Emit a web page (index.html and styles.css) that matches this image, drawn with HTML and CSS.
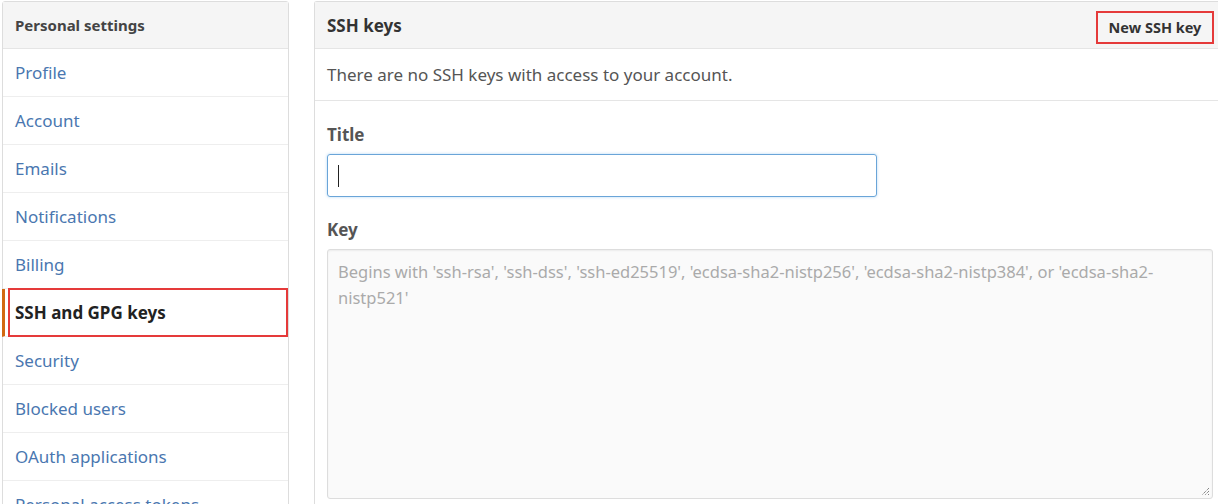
FILE: index.html
```html
<!DOCTYPE html>
<html>
<head>
<meta charset="utf-8">
<link rel="stylesheet" href="styles.css">
</head>
<body>
<div class="page">
  <nav class="menu">
    <div class="menu-heading">Personal settings</div>
    <a class="menu-item">Profile</a>
    <a class="menu-item">Account</a>
    <a class="menu-item">Emails</a>
    <a class="menu-item">Notifications</a>
    <a class="menu-item">Billing</a>
    <a class="menu-item selected">SSH and GPG keys</a>
    <a class="menu-item">Security</a>
    <a class="menu-item">Blocked users</a>
    <a class="menu-item">OAuth applications</a>
    <a class="menu-item">Personal access tokens</a>
  </nav>
  <main class="main">
    <div class="panel-head">
      <h3 class="panel-title">SSH keys</h3>
      <button class="btn-new">New SSH key</button>
    </div>
    <div class="panel-row">There are no SSH keys with access to your account.</div>
    <form class="form">
      <label class="label">Title</label>
      <div class="input"><span class="caret"></span></div>
      <label class="label key-label">Key</label>
      <div class="textarea">
        <span class="placeholder">Begins with 'ssh-rsa', 'ssh-dss', 'ssh-ed25519', 'ecdsa-sha2-nistp256', 'ecdsa-sha2-nistp384', or 'ecdsa-sha2-nistp521'</span>
        <svg class="grip" width="10" height="10" viewBox="0 0 10 10"><path d="M9 2L2 9M9 5L5 9M9 8L8 9" stroke="#555" stroke-width="1" stroke-dasharray="1 1"/></svg>
      </div>
    </form>
  </main>
</div>
</body>
</html>
```
FILE: styles.css
```css
* { box-sizing: border-box; }
html, body { margin: 0; padding: 0; background: #fff; overflow: hidden; }
body {
  font-family: "Noto Sans", "Open Sans", "Liberation Sans", sans-serif;
  color: #333;
  height: 504px;
}
.page {
  display: flex;
  align-items: flex-start;
  padding: 1px 0 0 2px;
  width: 1218px;
  height: 504px;
}
.menu {
  width: 287px;
  flex: none;
  border: 1px solid #ddd;
  border-radius: 3px;
  display: flex;
  flex-direction: column;
}
.menu-heading {
  height: 47px;
  background: #f5f5f5;
  border-bottom: 1px solid #e5e5e5;
  padding: 0 12px;
  display: flex;
  align-items: center;
  font-size: 15px;
  font-weight: 700;
  color: #444;
}
.menu-item {
  height: 48px;
  border-bottom: 1px solid #eee;
  padding: 0 12px;
  display: flex;
  align-items: center;
  font-size: 17px;
  color: #4a77b0;
  text-decoration: none;
  position: relative;
}
.menu-item.selected {
  font-weight: 700;
  color: #222;
  border-left: 3px solid #d26911;
  padding-left: 10px;
  margin-left: -1px;
}
.menu-item.selected::after {
  content: "";
  position: absolute;
  left: 3px;
  top: -1px;
  right: 0;
  bottom: -1px;
  border: 2.5px solid #e53a3a;
}
.main {
  margin-left: 25px;
  flex: 1;
  align-self: stretch;
  border: 1px solid #ddd;
  border-right: none;
  border-bottom: none;
  border-radius: 3px 0 0 0;
  display: flex;
  flex-direction: column;
}
.panel-head {
  height: 47px;
  background: #f5f5f5;
  border-bottom: 1px solid #e5e5e5;
  display: flex;
  align-items: center;
  justify-content: space-between;
  padding: 0 0 0 12px;
}
.panel-title {
  margin: 0;
  font-size: 17px;
  font-weight: 700;
  color: #333;
}
.btn-new {
  font-family: inherit;
  font-size: 14.5px;
  font-weight: 700;
  color: #333;
  background: #f5f5f5;
  border: 2.5px solid #e53a3a;
  height: 33px;
  width: 118px;
  padding: 0;
  margin-right: 4px;
  margin-top: 4px;
}
.panel-row {
  height: 52px;
  padding: 0 12px;
  display: flex;
  align-items: center;
  font-size: 17px;
  color: #555;
  border-bottom: 1px solid #e5e5e5;
}
.form {
  padding: 22px 0 0 12px;
  display: flex;
  flex-direction: column;
}
.label {
  font-size: 17px;
  font-weight: 700;
  color: #555;
  line-height: 24px;
}
.input {
  margin-top: 7px;
  width: 550px;
  height: 43px;
  border: 1px solid #6aa5d8;
  border-radius: 3px;
  box-shadow: 0 0 3px rgba(81, 167, 232, 0.45);
  display: flex;
  align-items: center;
  padding-left: 10px;
}
.caret {
  width: 1px;
  height: 22px;
  background: #222;
}
.key-label { margin-top: 21px; }
.textarea {
  margin-top: 7px;
  width: 886px;
  height: 250px;
  border: 1px solid #ddd;
  border-radius: 3px;
  background: #fafafa;
  box-shadow: inset 0 1px 2px rgba(0,0,0,0.06);
  padding: 9px 10px;
  position: relative;
  font-size: 16.5px;
  line-height: 26px;
  color: #aaa;
}
.grip {
  position: absolute;
  right: 2px;
  bottom: 2px;
}
```
